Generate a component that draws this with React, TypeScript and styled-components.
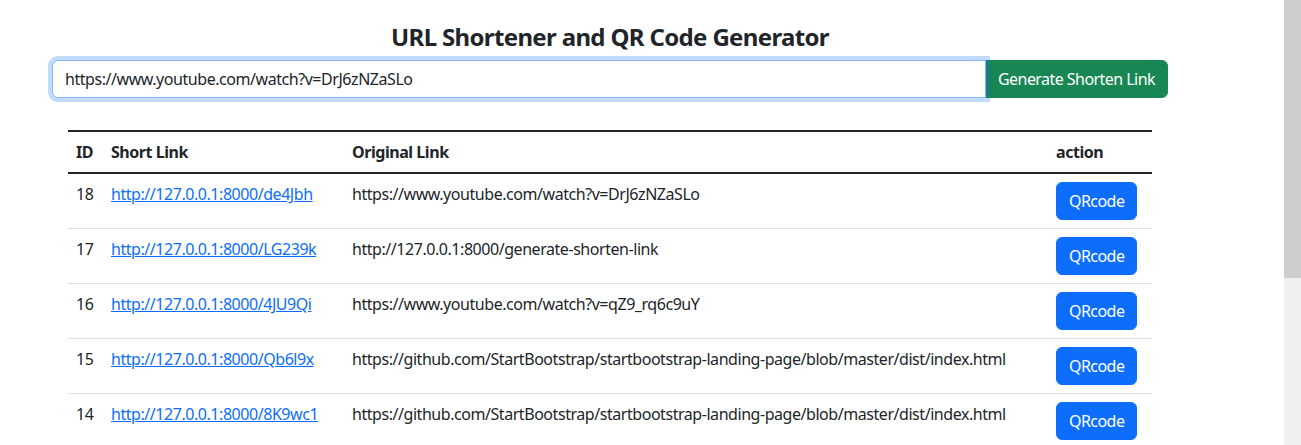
import React, { useEffect, useRef } from "react";
import styled, { createGlobalStyle } from "styled-components";

const GlobalStyle = createGlobalStyle`
  html, body {
    margin: 0;
    padding: 0;
    overflow: hidden;
    background: #fff;
  }
  body {
    font-family: "Noto Sans", "Open Sans", sans-serif;
    font-size: 16px;
    line-height: 24px;
    color: #212529;
    letter-spacing: -0.45px;
  }
  * { box-sizing: border-box; }
`;

const Shell = styled.div`
  display: flex;
  height: 100vh;
  width: 100vw;
`;

const Main = styled.main`
  flex: 1;
  overflow: hidden;
  padding-top: 23px;
`;

const ScrollTrack = styled.aside`
  width: 17px;
  flex: 0 0 17px;
  background: #f0f0f0;
  display: flex;
  flex-direction: column;
`;

const ScrollThumb = styled.div`
  height: 278px;
  background: #cdcdcd;
`;

const Container = styled.div`
  width: 1116px;
  margin-left: 52px;
`;

const Title = styled.h4`
  margin: 0 0 8px;
  font-size: 24px;
  line-height: 28.8px;
  font-weight: 700;
  text-align: center;
  letter-spacing: -0.65px;
  color: #212529;
`;

const InputGroup = styled.form`
  display: flex;
  align-items: stretch;
  width: 100%;
`;

const UrlInput = styled.input`
  flex: 1;
  position: relative;
  z-index: 2;
  height: 38px;
  padding: 6px 12px;
  font-family: inherit;
  font-size: 16px;
  line-height: 24px;
  letter-spacing: -0.45px;
  color: #212529;
  background: #fff;
  border: 1px solid #86b7fe;
  border-radius: 6px 0 0 6px;
  outline: none;
  box-shadow: 0 0 0 4px rgba(13, 110, 253, 0.25);
  caret-color: #212529;
`;

const Button = styled.button<{ $variant: "success" | "primary"; $joined?: boolean }>`
  height: 38px;
  padding: 6px 12px;
  font-family: inherit;
  font-size: 16px;
  line-height: 24px;
  letter-spacing: -0.55px;
  color: #fff;
  white-space: nowrap;
  cursor: pointer;
  background: ${(p) => (p.$variant === "success" ? "#198754" : "#0d6efd")};
  border: 1px solid ${(p) => (p.$variant === "success" ? "#198754" : "#0d6efd")};
  border-radius: ${(p) => (p.$joined ? "0 6px 6px 0" : "6px")};
  margin-left: ${(p) => (p.$joined ? "-1px" : "0")};
`;

const Table = styled.table`
  width: 1084px;
  margin: 32px 16px 0;
  border-collapse: collapse;
  table-layout: fixed;
  border-top: 2px solid #212529;
`;

const HeadRow = styled.tr`
  border-bottom: 2px solid #212529;
`;

const Th = styled.th`
  padding: 8px;
  text-align: left;
  font-weight: 700;
  vertical-align: top;
`;

const BodyRow = styled.tr`
  border-bottom: 1px solid #dee2e6;
`;

const Td = styled.td`
  padding: 8px;
  vertical-align: top;
  white-space: nowrap;
`;

const Link = styled.a`
  color: #0d6efd;
  text-decoration: underline;
`;

const rows = [
  { id: 18, code: "de4Jbh", url: "https://www.youtube.com/watch?v=DrJ6zNZaSLo" },
  { id: 17, code: "LG239k", url: "http://127.0.0.1:8000/generate-shorten-link" },
  { id: 16, code: "4JU9Qi", url: "https://www.youtube.com/watch?v=qZ9_rq6c9uY" },
  {
    id: 15,
    code: "Qb6l9x",
    url: "https://github.com/StartBootstrap/startbootstrap-landing-page/blob/master/dist/index.html",
  },
  {
    id: 14,
    code: "8K9wc1",
    url: "https://github.com/StartBootstrap/startbootstrap-landing-page/blob/master/dist/index.html",
  },
];

export default function App() {
  const inputRef = useRef<HTMLInputElement>(null);
  const value = "https://www.youtube.com/watch?v=DrJ6zNZaSLo";

  useEffect(() => {
    const el = inputRef.current;
    if (el) {
      el.focus();
      el.setSelectionRange(value.length, value.length);
    }
  }, []);

  return (
    <>
      <GlobalStyle />
      <Shell>
        <Main>
          <Container>
            <Title>URL Shortener and QR Code Generator</Title>
            <InputGroup onSubmit={(e) => e.preventDefault()}>
              <UrlInput ref={inputRef} type="text" defaultValue={value} />
              <Button type="submit" $variant="success" $joined>
                Generate Shorten Link
              </Button>
            </InputGroup>
            <Table>
              <colgroup>
                <col style={{ width: 35 }} />
                <col style={{ width: 241 }} />
                <col style={{ width: 704 }} />
                <col style={{ width: 104 }} />
              </colgroup>
              <thead>
                <HeadRow>
                  <Th>ID</Th>
                  <Th>Short Link</Th>
                  <Th>Original Link</Th>
                  <Th>action</Th>
                </HeadRow>
              </thead>
              <tbody>
                {rows.map((r) => (
                  <BodyRow key={r.id}>
                    <Td>{r.id}</Td>
                    <Td>
                      <Link href={`http://127.0.0.1:8000/${r.code}`}>http://127.0.0.1:8000/{r.code}</Link>
                    </Td>
                    <Td>{r.url}</Td>
                    <Td>
                      <Button type="button" $variant="primary">
                        QRcode
                      </Button>
                    </Td>
                  </BodyRow>
                ))}
              </tbody>
            </Table>
          </Container>
        </Main>
        <ScrollTrack>
          <ScrollThumb />
        </ScrollTrack>
      </Shell>
    </>
  );
}
